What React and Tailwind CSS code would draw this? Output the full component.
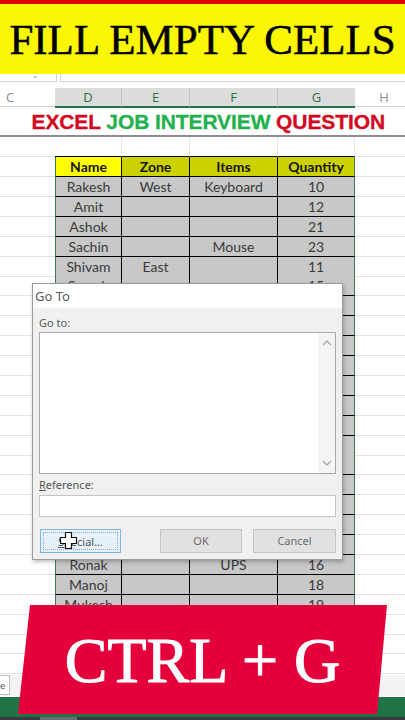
import React from 'react';

const cols = 'grid grid-cols-[55px_67px_68px_88px_77px_50px]';

const data = [
  ['Rakesh', 'West', 'Keyboard', '10'],
  ['Amit', '', '', '12'],
  ['Ashok', '', '', '21'],
  ['Sachin', '', 'Mouse', '23'],
  ['Shivam', 'East', '', '11'],
  ['Suresh', '', '', '15'],
  ['Vikas', 'North', 'Monitor', '20'],
  ['Rahul', '', '', '17'],
  ['Anil', '', '', '13'],
  ['Sunil', '', 'Printer', '22'],
  ['Mohit', 'South', '', '14'],
  ['Rohit', '', '', '19'],
  ['Pankaj', '', 'Scanner', '25'],
  ['Naresh', '', '', '18'],
  ['Vijay', 'West', '', '12'],
  ['Ajay', '', 'Mouse', '16'],
  ['Deepak', '', '', '20'],
  ['Kamal', '', '', '11'],
  ['Ravi', 'East', 'CPU', '24'],
  ['Ronak', '', 'UPS', '16'],
  ['Manoj', '', '', '18'],
  ['Mukesh', '', '', '19'],
  ['Gopal', '', '', '15'],
  ['Hari', '', 'Cable', '13'],
  ['Mahesh', '', '', '21'],
];

const Chevron = ({ down }) => (
  <svg width="10" height="6" viewBox="0 0 10 6" className="block">
    <polyline
      points={down ? '1,1 5,5 9,1' : '1,5 5,1 9,5'}
      fill="none"
      stroke="#a6a6a6"
      strokeWidth="1.3"
    />
  </svg>
);

const Row = ({ r }) => (
  <div className={`${cols} h-[19.9px] text-[14px] leading-[19px] text-[#3a3a3a]`}>
    <div className="border-b border-[#e2e2e2]" />
    <div className="bg-[#c8c8c8] border-l-[1.5px] border-l-[#3f7a52] border-r border-b border-black text-center">{r[0]}</div>
    <div className="bg-[#c8c8c8] border-r border-b border-black text-center">{r[1]}</div>
    <div className="bg-[#c8c8c8] border-r border-b border-black text-center">{r[2]}</div>
    <div className="bg-[#c8c8c8] border-r-[1.5px] border-r-[#3f7a52] border-b border-black text-center">{r[3]}</div>
    <div className="border-b border-[#e2e2e2]" />
  </div>
);

export default function App() {
  return (
    <div className="relative w-[405px] h-[720px] overflow-hidden bg-white font-['Lato',sans-serif]">
      {/* title banner */}
      <div className="h-[4px] bg-[#e00000]" />
      <div className="h-[70px] bg-[#fbf506] flex items-center justify-center">
        <h1 className="font-['Liberation_Serif',serif] text-[43px] leading-none text-black [-webkit-text-stroke:0.5px_#000] mt-[1px]">
          FILL EMPTY CELLS
        </h1>
      </div>

      {/* formula bar */}
      <div className="h-[14px] flex bg-white">
        <div className="w-[57px] h-[8px] border-r border-b border-[#d4d4d4] relative">
          <span className="absolute left-[32px] -top-[5px] text-[8px] text-[#999]">⌄</span>
        </div>
        <div className="w-[3px]" />
        <div className="flex-1 h-[8px] border-l border-b border-[#d4d4d4]" />
      </div>

      {/* column headers */}
      <div className={`${cols} h-[19px] text-[13px] leading-[18px] font-['Open_Sans',sans-serif] text-center border-b border-[#d0d0d0]`}>
        <div className="text-[#8a8a8a] text-left pl-[6px]">C</div>
        <div className="bg-[#dcdcdc] text-[#2d6e45] border-r border-[#c2c2c2] border-b-2 border-b-[#217346]">D</div>
        <div className="bg-[#dcdcdc] text-[#2d6e45] border-r border-[#c2c2c2] border-b-2 border-b-[#217346]">E</div>
        <div className="bg-[#dcdcdc] text-[#2d6e45] border-r border-[#c2c2c2] border-b-2 border-b-[#217346]">F</div>
        <div className="bg-[#dcdcdc] text-[#2d6e45] border-b-2 border-b-[#217346]">G</div>
        <div className="text-[#8a8a8a] pl-[8px]">H</div>
      </div>

      {/* row with heading */}
      <div className="h-[30px] border-b-2 border-[#8c8c8c] flex items-center justify-end pr-[20px]">
        <p className="font-['Liberation_Sans',sans-serif] font-bold text-[21px] leading-none tracking-[-0.1px] [-webkit-text-stroke:0.3px_currentColor]">
          <span className="text-[#d10a1f]">EXCEL </span>
          <span className="text-[#23b14d]">JOB INTERVIEW </span>
          <span className="text-[#d10a1f]">QUESTION</span>
        </p>
      </div>

      {/* sheet */}
      <div className="h-[538px] overflow-hidden">
        <div className={`${cols} h-[20px]`}>
          <div className="border-b border-[#e2e2e2]" />
          <div className="border-r border-[#e6e6e6] border-b border-b-black" />
          <div className="border-r border-[#e6e6e6] border-b border-b-black" />
          <div className="border-r border-[#e6e6e6] border-b border-b-black" />
          <div className="border-r border-[#e6e6e6] border-b border-b-black" />
          <div className="border-b border-[#e2e2e2]" />
        </div>
        <div className={`${cols} h-[20px] text-[14px] leading-[19px] font-bold text-[#161616] text-center`}>
          <div className="border-b border-[#e2e2e2]" />
          <div className="bg-[#ffff00] border-l-[1.5px] border-l-[#3f7a52] border-r border-b border-black">Name</div>
          <div className="bg-[#ccd100] border-r border-b border-black">Zone</div>
          <div className="bg-[#ccd100] border-r border-b border-black">Items</div>
          <div className="bg-[#ccd100] border-r-[1.5px] border-r-[#3f7a52] border-b border-black">Quantity</div>
          <div className="border-b border-[#e2e2e2]" />
        </div>
        {data.map((r, i) => (
          <Row key={i} r={r} />
        ))}
      </div>

      {/* sheet tabs + status bar */}
      <div className="h-[22px] bg-[#f3f3f3] flex">
        <div className="w-[10px] h-[20px] bg-white border border-[#bdbdbd] border-l-0 text-[10px] leading-[18px] text-[#555] overflow-hidden">e</div>
      </div>
      <div className="h-[20px] bg-[#217346]" />
      <div className="h-[3px] bg-[#3a3a3a] flex">
        <div className="ml-[40px] w-[37px] bg-[#6c6c6c]" />
      </div>

      {/* Go To dialog */}
      <div className="absolute left-[32px] top-[283px] w-[311px] h-[277px] bg-[#f0f0f0] border border-[#9c9c9c] shadow-[1px_2px_4px_rgba(0,0,0,0.25)] font-['Noto_Sans',sans-serif] flex flex-col">
        <div className="h-[24px] bg-white pl-[2px] text-[13px] leading-[24px] text-[#5a5a5a]">Go To</div>
        <div className="flex-1 px-[6px] pt-[8px] flex flex-col">
          <div className="text-[11px] leading-[14px] text-[#555]">Go to:</div>
          <div className="mt-[2px] h-[142px] bg-white border border-[#a8a8a8] flex justify-end">
            <div className="w-[17px] bg-[#f4f4f4] flex flex-col items-center justify-between py-[7px]">
              <Chevron />
              <Chevron down />
            </div>
          </div>
          <div className="mt-[4px] text-[11px] leading-[14px] text-[#555]">
            <span className="underline">R</span>eference:
          </div>
          <div className="mt-[3px] h-[22px] bg-white border border-[#c4c4c4]" />
          <div className="mt-[12px] flex items-center">
            <div className="ml-[1px] w-[81px] h-[24px] bg-[#e5f1fb] border border-[#7fb4e6] p-[2px]">
              <div className="h-full border border-dotted border-[#8aa8c4] text-[11px] leading-[17px] text-[#555] text-center">
                <span className="underline">S</span>pecial...
              </div>
            </div>
            <div className="ml-[39px] w-[82px] h-[24px] bg-[#e1e1e1] border border-[#c4c4c4] text-[11px] leading-[22px] text-[#6a6a6a] text-center">OK</div>
            <div className="ml-[11px] w-[83px] h-[24px] bg-[#e1e1e1] border border-[#c4c4c4] text-[11px] leading-[22px] text-[#6a6a6a] text-center">Cancel</div>
          </div>
        </div>
        {/* cell cursor */}
        <svg width="17" height="17" viewBox="0 0 17 17" className="absolute left-[27px] top-[248px]">
          <polygon
            points="5.5,0.5 11.5,0.5 11.5,5.5 16.5,5.5 16.5,11.5 11.5,11.5 11.5,16.5 5.5,16.5 5.5,11.5 0.5,11.5 0.5,5.5 5.5,5.5"
            fill="#fff"
            stroke="#111"
            strokeWidth="1.2"
          />
        </svg>
      </div>

      {/* CTRL + G banner */}
      <div className="absolute left-[18px] top-[605px] w-[369px] h-[109px] bg-[#e4003a] [clip-path:polygon(12px_0,100%_0,359px_100%,0_100%)] flex items-center justify-center">
        <span className="font-['Liberation_Serif',serif] text-[64px] leading-none text-white [-webkit-text-stroke:1px_#fff] mt-[2px]">
          CTRL + G
        </span>
      </div>
    </div>
  );
}
